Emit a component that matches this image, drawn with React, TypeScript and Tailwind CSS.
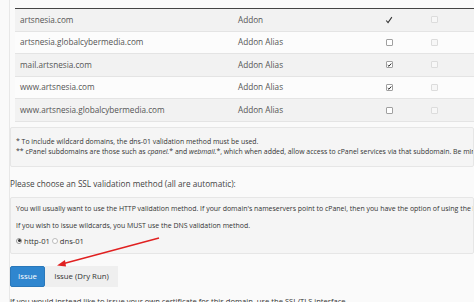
import type { ReactNode } from "react";

type Row = {
  domain: string;
  type: string;
  include: "tick" | "on" | "off";
  stripe: boolean;
};

const rows: Row[] = [
  { domain: "artsnesia.com", type: "Addon", include: "tick", stripe: true },
  { domain: "artsnesia.globalcybermedia.com", type: "Addon Alias", include: "off", stripe: false },
  { domain: "mail.artsnesia.com", type: "Addon Alias", include: "on", stripe: true },
  { domain: "www.artsnesia.com", type: "Addon Alias", include: "on", stripe: false },
  { domain: "www.artsnesia.globalcybermedia.com", type: "Addon Alias", include: "off", stripe: true },
];

function Box({ checked, disabled }: { checked?: boolean; disabled?: boolean }) {
  return (
    <span
      className={`inline-flex items-center justify-center w-[7px] h-[7px] rounded-[1px] border ${
        disabled ? "border-[#dcdcdc] bg-[#f7f7f7]" : "border-[#a0a0a0] bg-white"
      }`}
    >
      {checked && (
        <svg viewBox="0 0 8 8" className="w-[6px] h-[6px]">
          <path d="M1.2 4.2 L3.1 6 L6.8 1.6" fill="none" stroke="#222" strokeWidth="1.6" />
        </svg>
      )}
    </span>
  );
}

function Well({ children, className = "" }: { children: ReactNode; className?: string }) {
  return (
    <div className={`bg-[#f5f5f5] border border-[#e6e6e6] rounded-[2px] ${className}`}>{children}</div>
  );
}

export default function App() {
  return (
    <div
      className="w-[474px] h-[302px] overflow-hidden bg-[#fafafa] text-[#333]"
      style={{ fontFamily: '"Open Sans", "Noto Sans", sans-serif' }}
    >
      <div className="ml-[9px] border-l border-[#e8e8e8] h-full">
        {/* domains table */}
        <div className="pt-[8px] pl-[5px]">
          <div className="border-t-[1.5px] border-[#444] w-[470px]">
            {rows.map((r) => (
              <div
                key={r.domain}
                className={`flex items-center h-[22.6px] border-b border-[#e4e4e4] text-[8.2px] text-[#555] ${
                  r.stripe ? "bg-[#f2f2f2]" : "bg-[#fcfcfc]"
                }`}
              >
                <div className="w-[218px] pl-[5px] whitespace-nowrap">{r.domain}</div>
                <div className="w-[128px] pl-[5px] whitespace-nowrap">{r.type}</div>
                <div className="w-[56px] flex justify-center">
                  {r.include === "tick" ? (
                    <svg viewBox="0 0 10 10" className="w-[8px] h-[8px]">
                      <path d="M1.5 5.6 L3.8 8.2 L8.6 1.4" fill="none" stroke="#333" strokeWidth="1.3" />
                    </svg>
                  ) : (
                    <Box checked={r.include === "on"} />
                  )}
                </div>
                <div className="w-[34px] flex justify-center">
                  <Box disabled />
                </div>
              </div>
            ))}
          </div>
        </div>

        {/* notes */}
        <Well className="mt-[5px] pl-[5px] py-[9px] text-[6.9px] leading-[10px] whitespace-nowrap overflow-hidden">
          <p>* To include wildcard domains, the dns-01 validation method must be used.</p>
          <p>
            ** cPanel subdomains are those such as <i>cpanel.</i>* and <i>webmail.</i>*, which when added, allow
            access to cPanel services via that subdomain. Be mindful of these.
          </p>
        </Well>

        <p className="mt-[11px] text-[8.2px] leading-[12px] text-[#444] whitespace-nowrap">
          Please choose an SSL validation method (all are automatic):
        </p>

        <Well className="mt-[7px] pl-[5px] pt-[6px] pb-[7px] text-[6.95px] whitespace-nowrap overflow-hidden">
          <p className="leading-[10px]">
            You will usually want to use the HTTP validation method. If your domain&apos;s nameservers point to
            cPanel, then you have the option of using the DNS method.
          </p>
          <p className="leading-[10px] mt-[7px]">
            If you wish to issue wildcards, you MUST use the DNS validation method.
          </p>
          <div className="flex items-center mt-[5px] text-[7.6px] leading-[10px]">
            <span className="w-[6px] h-[6px] rounded-full border border-[#999] bg-white flex items-center justify-center mr-[2px]">
              <span className="w-[3px] h-[3px] rounded-full bg-[#333]" />
            </span>
            <span className="mr-[2px]">http-01</span>
            <span className="w-[6px] h-[6px] rounded-full border border-[#bbb] bg-white mr-[2px]" />
            <span>dns-01</span>
          </div>
        </Well>

        <div className="relative mt-[12px] flex items-center text-[7.8px]">
          <button className="h-[21px] w-[35px] bg-[#2f86cf] border border-[#2a78ba] rounded-[2px] text-white">
            Issue
          </button>
          <button className="h-[21px] w-[73px] bg-[#efefef] text-[#333]">Issue (Dry Run)</button>
          {/* annotation arrow */}
          <svg
            className="absolute left-[40px] top-[-32px] w-[120px] h-[40px] overflow-visible"
            viewBox="0 0 120 40"
          >
            <line x1="109" y1="4" x2="12" y2="30" stroke="#e02020" strokeWidth="1.4" />
            <path d="M7 31.5 L15 26 L16 32.5 Z" fill="#e02020" />
          </svg>
        </div>

        <p className="mt-[9px] text-[7.6px] whitespace-nowrap">
          If you would instead like to issue your own certificate for this domain, use the SSL/TLS interface.
        </p>
      </div>
    </div>
  );
}
